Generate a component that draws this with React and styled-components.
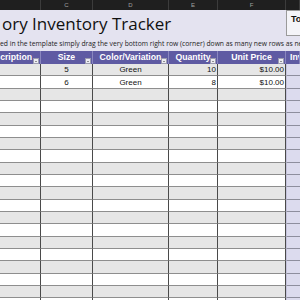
import React from 'react';
import styled, { createGlobalStyle } from 'styled-components';

const Global = createGlobalStyle`
  html, body { margin: 0; padding: 0; background: #fff; }
  body { width: 300px; height: 300px; overflow: hidden; font-family: "Liberation Sans", Arial, sans-serif; }
`;

const COLS = '41px 52px 76px 49px 68px 1fr';

const Sheet = styled.div`
  width: 300px;
  height: 300px;
  overflow: hidden;
  display: flex;
  flex-direction: column;
`;

const LetterBar = styled.div`
  flex: none;
  display: grid;
  grid-template-columns: ${COLS};
  height: 10px;
  background: #1f1f1f;
`;

const Letter = styled.div`
  border-right: 1px solid #3c3c3c;
  color: #a0a0a0;
  font-size: 6px;
  line-height: 10px;
  text-align: center;
`;

const TitleBand = styled.div`
  flex: none;
  height: 41px;
  background: #e4e3f0;
  display: flex;
  flex-direction: column;
`;

const TitleRow = styled.div`
  display: flex;
  height: 27px;
`;

const Title = styled.h1`
  flex: 1;
  margin: 0;
  padding-left: 2px;
  font-family: "Open Sans", "Liberation Sans", sans-serif;
  font-weight: 400;
  font-size: 17px;
  line-height: 28px;
  color: #111;
  white-space: nowrap;
  overflow: hidden;
`;

const TotalBox = styled.div`
  width: 14px;
  height: 26px;
  box-sizing: border-box;
  border: 1px solid #9a9a9a;
  border-right: none;
  background: #f4f4f8;
  font-weight: bold;
  font-size: 9px;
  padding: 3px 0 0 4px;
  overflow: hidden;
  white-space: nowrap;
  color: #111;
`;

const Subtitle = styled.p`
  margin: 0;
  height: 14px;
  font-family: "Open Sans", "Liberation Sans", sans-serif;
  font-size: 6.75px;
  line-height: 14px;
  color: #222;
  white-space: nowrap;
  overflow: hidden;
`;

const HeaderRow = styled.div`
  flex: none;
  display: grid;
  grid-template-columns: ${COLS};
  height: 13px;
  background: #5f5ba3;
`;

const HeadCell = styled.div`
  position: relative;
  box-sizing: border-box;
  border-right: 1px solid #8a87bf;
  color: #fff;
  font-weight: bold;
  font-size: 8.7px;
  line-height: 13px;
  padding-right: ${p => p.$pr || 0}px;
  padding-left: ${p => p.$pl || 0}px;
  white-space: nowrap;
  overflow: hidden;
  display: flex;
  justify-content: ${p => p.$align === 'right' ? 'flex-end' : p.$align === 'left' ? 'flex-start' : 'center'};
`;

const FilterBtn = styled.span`
  position: absolute;
  right: 1px;
  bottom: 0;
  width: 6px;
  height: 6px;
  box-sizing: border-box;
  background: #ececf2;
  border: 1px solid #9c9cb0;
  &::after {
    content: '';
    position: absolute;
    left: 1px;
    top: 2px;
    border-left: 1px solid transparent;
    border-right: 1px solid transparent;
    border-top: 1.5px solid #333;
  }
`;

const Body = styled.div`
  flex: 1;
  display: flex;
  flex-direction: column;
`;

const Row = styled.div`
  flex: none;
  display: grid;
  grid-template-columns: ${COLS};
  height: 12.33px;
  background: ${p => (p.$shade ? '#e6e6e6' : '#ffffff')};
`;

const Cell = styled.div`
  box-sizing: border-box;
  border-right: 1px solid #4a4a4a;
  border-bottom: 1px solid #8e8e8e;
  font-size: 8px;
  color: #111;
  display: flex;
  align-items: flex-end;
  justify-content: ${p => p.$align === 'right' ? 'flex-end' : 'center'};
  padding-right: ${p => p.$pr || 0}px;
  padding-bottom: 1px;
  line-height: 1;
  white-space: nowrap;
  overflow: hidden;
`;

const SideCell = styled.div`
  box-sizing: border-box;
  border-bottom: 1px solid #8e8e9e;
  border-left: 1px solid #c4c3dc;
  background: #dcdbee;
`;

const data = [
  { size: '5', color: 'Green', qty: '10', price: '$10.00' },
  { size: '6', color: 'Green', qty: '8', price: '$10.00' },
];

const rows = Array.from({ length: 20 }, (_, i) => data[i] || {});

export default function App() {
  return (
    <Sheet>
      <Global />
      <LetterBar>
        <Letter></Letter>
        <Letter>C</Letter>
        <Letter>D</Letter>
        <Letter>E</Letter>
        <Letter>F</Letter>
        <Letter></Letter>
      </LetterBar>
      <TitleBand>
        <TitleRow>
          <Title>ory Inventory Tracker</Title>
          <TotalBox>Total</TotalBox>
        </TitleRow>
        <Subtitle>ed in the template simply drag the very bottom right row (corner) down as many new rows as needed</Subtitle>
      </TitleBand>
      <HeaderRow>
        <HeadCell $align="right" $pr={8}>Description<FilterBtn /></HeadCell>
        <HeadCell>Size<FilterBtn /></HeadCell>
        <HeadCell>Color/Variation<FilterBtn /></HeadCell>
        <HeadCell>Quantity<FilterBtn /></HeadCell>
        <HeadCell>Unit Price<FilterBtn /></HeadCell>
        <HeadCell $align="left" $pl={4}>Inventory Value</HeadCell>
      </HeaderRow>
      <Body>
        {rows.map((r, i) => (
          <Row key={i} $shade={i % 2 === 0}>
            <Cell />
            <Cell>{r.size}</Cell>
            <Cell>{r.color}</Cell>
            <Cell $align="right" $pr={1}>{r.qty}</Cell>
            <Cell $align="right" $pr={1}>{r.price}</Cell>
            <SideCell />
          </Row>
        ))}
      </Body>
    </Sheet>
  );
}
